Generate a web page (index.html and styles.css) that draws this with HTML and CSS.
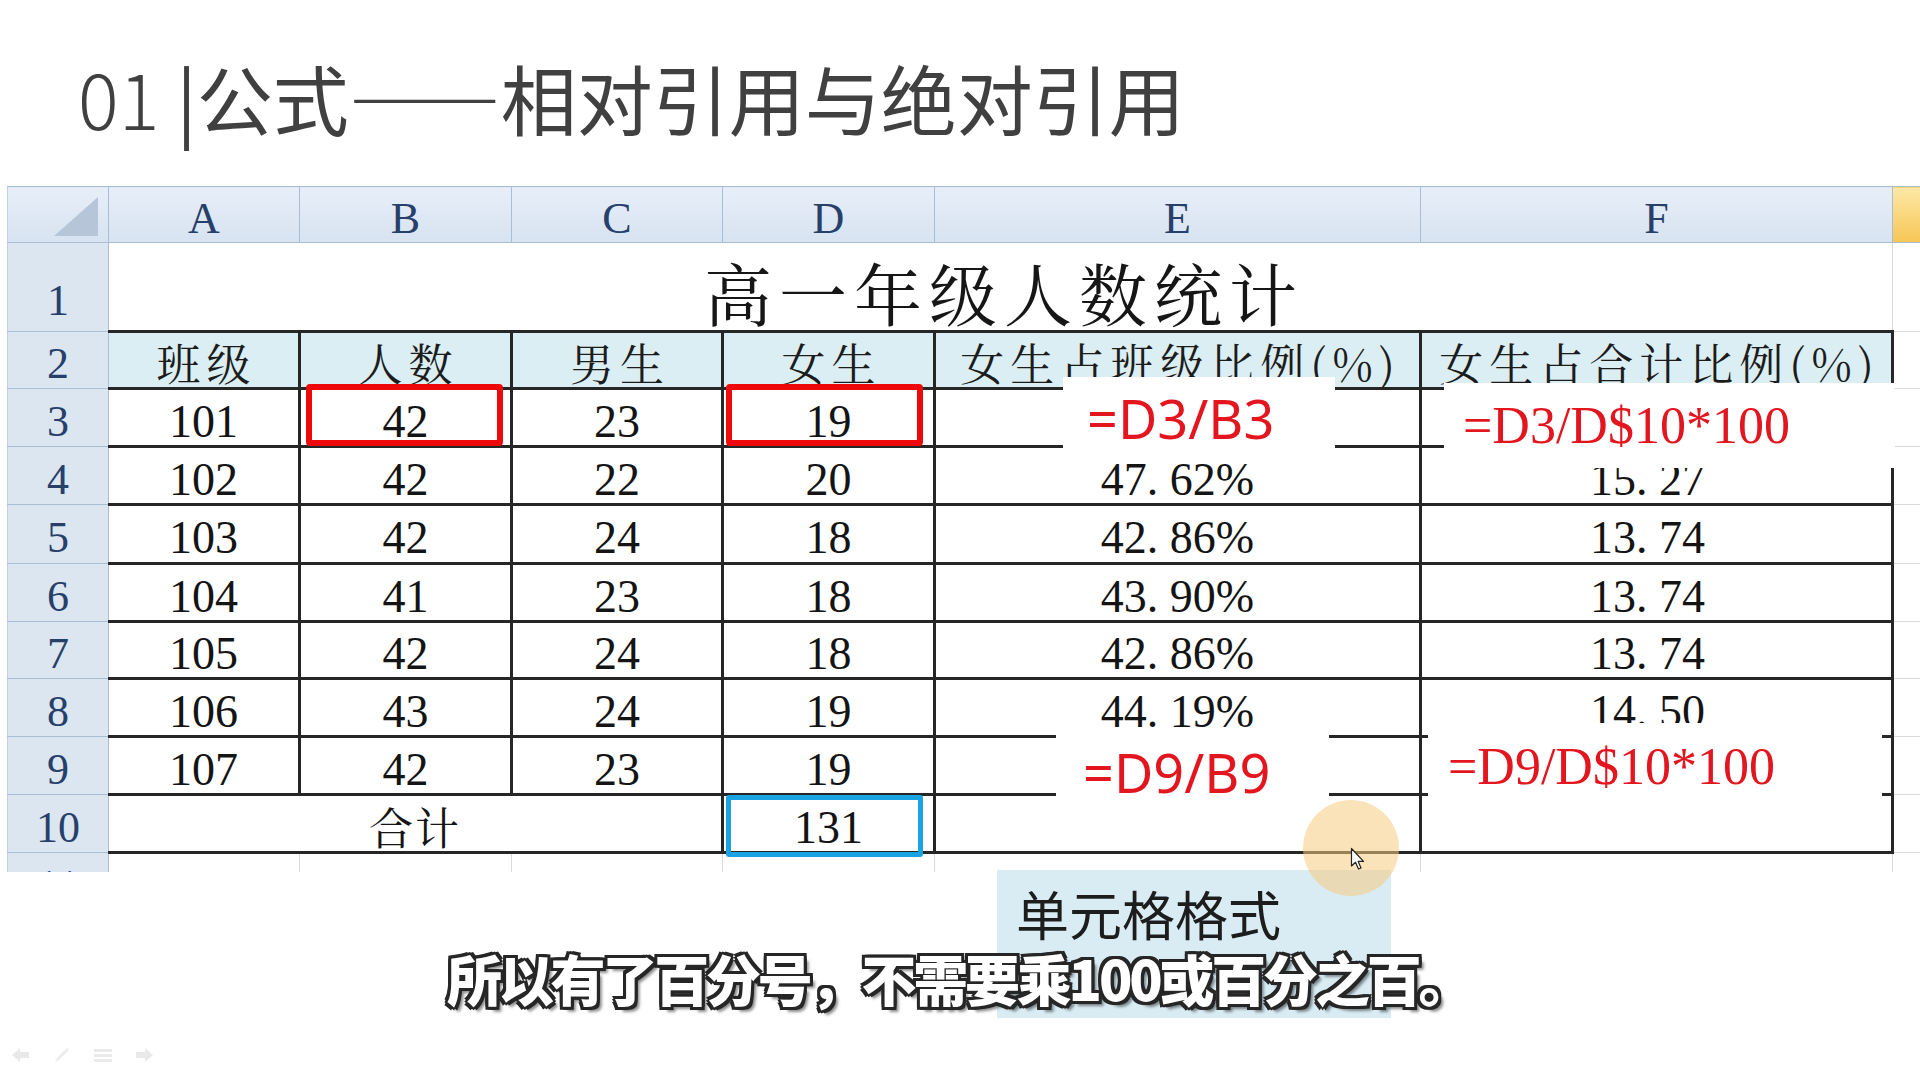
FILE: index.html
```html
<!DOCTYPE html>
<html lang="zh-CN">
<head>
<meta charset="utf-8">
<title>01 公式——相对引用与绝对引用</title>
<link rel="stylesheet" href="styles.css">
</head>
<body>
<div class="slide">
  <h1 class="title"><span class="num">01 </span><span class="bar">|</span>公式<span class="dash">——</span>相对引用与绝对引用</h1>

  <div class="sheet">
    <table class="grid">
      <colgroup>
        <col class="w-rh"><col class="w-a"><col class="w-b"><col class="w-c"><col class="w-d"><col class="w-e"><col class="w-f"><col class="w-g">
      </colgroup>
      <tr class="h-hdr">
        <th class="ch corner"><svg class="tri" width="44" height="39" viewBox="0 0 44 39"><polygon points="44,0 44,39 0,39" fill="#b7c5d8"/></svg></th>
        <th class="ch">A</th><th class="ch">B</th><th class="ch">C</th><th class="ch">D</th><th class="ch">E</th><th class="ch">F</th><th class="ch sel"></th>
      </tr>
      <tr class="h-r1">
        <th class="rh rh-low">1</th>
        <td colspan="6" class="tcell">高一年级人数统计</td>
        <td class="g"></td>
      </tr>
      <tr class="h-r2">
        <th class="rh">2</th>
        <td class="d hd first">班级</td><td class="d hd">人数</td><td class="d hd">男生</td><td class="d hd">女生</td><td class="d hd">女生占班级比例(%)</td><td class="d hd">女生占合计比例(%)</td>
        <td class="g"></td>
      </tr>
      <tr class="h-r">
        <th class="rh">3</th>
        <td class="d first">101</td><td class="d">42</td><td class="d">23</td><td class="d">19</td><td class="d"></td><td class="d fc"></td>
        <td class="g"></td>
      </tr>
      <tr class="h-r">
        <th class="rh">4</th>
        <td class="d first">102</td><td class="d">42</td><td class="d">22</td><td class="d">20</td><td class="d">47. 62%</td><td class="d fc">15. 27</td>
        <td class="g"></td>
      </tr>
      <tr class="h-r5">
        <th class="rh">5</th>
        <td class="d first">103</td><td class="d">42</td><td class="d">24</td><td class="d">18</td><td class="d">42. 86%</td><td class="d fc">13. 74</td>
        <td class="g"></td>
      </tr>
      <tr class="h-r">
        <th class="rh">6</th>
        <td class="d first">104</td><td class="d">41</td><td class="d">23</td><td class="d">18</td><td class="d">43. 90%</td><td class="d fc">13. 74</td>
        <td class="g"></td>
      </tr>
      <tr class="h-r7">
        <th class="rh">7</th>
        <td class="d first">105</td><td class="d">42</td><td class="d">24</td><td class="d">18</td><td class="d">42. 86%</td><td class="d fc">13. 74</td>
        <td class="g"></td>
      </tr>
      <tr class="h-r">
        <th class="rh">8</th>
        <td class="d first">106</td><td class="d">43</td><td class="d">24</td><td class="d">19</td><td class="d">44. 19%</td><td class="d fc">14. 50</td>
        <td class="g"></td>
      </tr>
      <tr class="h-r">
        <th class="rh">9</th>
        <td class="d first">107</td><td class="d">42</td><td class="d">23</td><td class="d">19</td><td class="d"></td><td class="d fc"></td>
        <td class="g"></td>
      </tr>
      <tr class="h-r">
        <th class="rh">10</th>
        <td colspan="3" class="d first sum">合计</td><td class="d">131</td><td class="d"></td><td class="d"></td>
        <td class="g"></td>
      </tr>
      <tr class="h-r">
        <th class="rh">11</th>
        <td class="g"></td><td class="g"></td><td class="g"></td><td class="g"></td><td class="g"></td><td class="g"></td><td class="g"></td>
      </tr>
    </table>
  </div>

  <div class="ov wb wb-e3 f-sans">=D3/B3</div>
  <div class="ov wb wb-f3 f-serif">=D3/D$10*100</div>
  <div class="ov wb wb-e9 f-sans">=D9/B9</div>
  <div class="ov wb wb-f9 f-serif">=D9/D$10*100</div>

  <div class="ov rb rb-b3"></div>
  <div class="ov rb rb-d3"></div>
  <div class="ov bb"></div>

  <div class="ov tip">单元格格式</div>
  <div class="ov hl"></div>
  <svg class="ov cursor" width="16" height="24" viewBox="0 0 16 24"><path d="M1.5 1.5 L1.5 19 L5.5 15.2 L8.5 22 L11 21 L8.2 14.4 L13.5 14.4 Z" fill="#fff" stroke="#222" stroke-width="1.2" stroke-linejoin="round"/></svg>

  <div class="ov sub">所以有了百分号，不需要乘100或百分之百。</div>

  <div class="ov nav">
    <svg width="20" height="18" viewBox="0 0 20 18"><polygon points="1,9 9,2 9,6 18,6 18,12 9,12 9,16" fill="#e9e9e9"/></svg>
    <svg width="20" height="18" viewBox="0 0 20 18"><path d="M3 16 L5 12 L15 2 L17 4 L7 14 Z" fill="#ececec"/></svg>
    <svg width="20" height="18" viewBox="0 0 20 18"><rect x="1" y="3" width="18" height="3" fill="#eaeaea"/><rect x="1" y="8" width="18" height="3" fill="#eaeaea"/><rect x="1" y="13" width="18" height="3" fill="#eaeaea"/></svg>
    <svg width="20" height="18" viewBox="0 0 20 18"><polygon points="19,9 11,2 11,6 2,6 2,12 11,12 11,16" fill="#e9e9e9"/></svg>
  </div>
</div>
</body>
</html>
```

FILE: styles.css
```css
* { box-sizing: border-box; }

body {
  margin: 0;
  background: #ffffff;
}

.slide {
  position: relative;
  width: 1920px;
  height: 1080px;
  overflow: hidden;
  background: #ffffff;
  font-family: "Noto Sans CJK SC", "Noto Sans", sans-serif;
}

/* ---------- slide title ---------- */
.title {
  margin: 0;
  height: 186px;
  padding: 55px 0 0 78px;
  font-size: 76px;
  line-height: 84px;
  font-weight: 400;
  color: #404040;
  letter-spacing: 0;
  white-space: nowrap;
}
.title .num { font-weight: 300; }
.title .dash { letter-spacing: 0; }

/* ---------- spreadsheet ---------- */
.sheet {
  margin-left: 7px;
  height: 686px;
  overflow: hidden;
}

.grid {
  border-collapse: collapse;
  table-layout: fixed;
  width: 1913px;
  font-family: "Liberation Serif", "Noto Serif CJK SC", "Noto Sans CJK SC", serif;
  color: #141414;
}

.w-rh { width: 101px; }
.w-a { width: 191px; }
.w-b { width: 212px; }
.w-c { width: 211px; }
.w-d { width: 212px; }
.w-e { width: 486px; }
.w-f { width: 472px; }
.w-g { width: 28px; }

.grid th,
.grid td {
  padding: 0;
  text-align: center;
  vertical-align: middle;
  white-space: nowrap;
  overflow: hidden;
  font-weight: 400;
}

.h-hdr { height: 56px; }
.h-r1 { height: 89px; }
.h-r2 { height: 57px; }
.h-r { height: 58px; }
.h-r5 { height: 59px; }
.h-r7 { height: 57px; }

/* column headers */
.ch {
  background: linear-gradient(#e7eef8, #d7e3f1);
  border: 1px solid #a9bdd4;
  font-size: 44px;
  line-height: 1;
  color: #27406a;
  padding-top: 8px !important;
}
.corner {
  text-align: right !important;
  vertical-align: bottom !important;
  padding: 0 10px 6px 0 !important;
  line-height: 0 !important;
  border-left: 1px solid #c3cfdd;
}
.tri { display: inline-block; vertical-align: bottom; }
.sel {
  background: linear-gradient(#fde8a6, #f6c656);
  border-left: 1px solid #d9b35a;
}

/* row headers */
.rh {
  background: #dce6f1;
  border: 1px solid #a9bdd4;
  border-left: 1px solid #c3cfdd;
  font-size: 44px;
  line-height: 1;
  color: #27406a;
  padding-top: 8px !important;
}
.rh-low {
  vertical-align: bottom !important;
  padding: 0 0 8px 0 !important;
}

/* title row */
.tcell {
  font-family: "Noto Serif CJK SC", "Noto Sans CJK SC", serif;
  font-size: 68px;
  line-height: 1.1;
  letter-spacing: 7px;
  padding: 12px 0 0 7px !important;
  color: #161616;
  border-right: 1px solid #dadada;
}

/* data cells */
.d {
  border: 3px solid #262626;
  font-size: 46px;
  line-height: 1;
  padding-top: 8px !important;
}
.d.first { border-left: none; }
.d.fc { padding-right: 18px !important; }
.hd {
  background: #dbeef3;
  font-family: "Noto Serif CJK SC", "Noto Sans CJK SC", serif;
  font-size: 44px;
  letter-spacing: 6px;
  padding: 4px 0 0 6px !important;
  color: #1c1c1c;
}
.sum {
  font-family: "Noto Serif CJK SC", "Noto Sans CJK SC", serif;
  font-size: 44px;
  letter-spacing: 2px;
  padding-top: 4px !important;
}

/* plain gridline cells */
.g {
  border: 1px solid #dadada;
}

/* ---------- overlays ---------- */
.ov { position: absolute; }

.wb {
  background: #ffffff;
  display: flex;
  align-items: center;
  white-space: nowrap;
}
.f-sans {
  font-family: "Noto Sans", "Liberation Sans", sans-serif;
  font-size: 54px;
  line-height: 1;
  color: #e3161f;
}
.f-serif {
  font-family: "Liberation Serif", serif;
  font-size: 52px;
  line-height: 1;
  color: #e3161f;
}
.wb-e3 { left: 1063px; top: 377px; width: 272px; height: 72px; padding: 10px 0 0 24px; }
.wb-f3 { left: 1444px; top: 383px; width: 451px; height: 85px; padding: 0 0 0 19px; }
.wb-e9 { left: 1056px; top: 734px; width: 273px; height: 66px; padding: 10px 0 0 27px; }
.wb-f9 { left: 1428px; top: 723px; width: 454px; height: 77px; padding: 11px 0 0 20px; }

.rb {
  border: 6px solid #ee0a0a;
  border-radius: 4px;
}
.rb-b3 { left: 306px; top: 384px; width: 197px; height: 62px; }
.rb-d3 { left: 726px; top: 384px; width: 197px; height: 62px; }

.bb {
  left: 726px;
  top: 795px;
  width: 197px;
  height: 62px;
  border: 5px solid #1aa3e2;
  border-radius: 3px;
}

.tip {
  left: 997px;
  top: 870px;
  width: 394px;
  height: 148px;
  background: #d9ecf3;
  padding: 13px 0 0 19px;
  font-size: 53px;
  line-height: 60px;
  color: #1d1d1d;
  white-space: nowrap;
}

.hl {
  left: 1303px;
  top: 800px;
  width: 96px;
  height: 96px;
  border-radius: 50%;
  background: rgba(245, 203, 128, 0.55);
}

.cursor { left: 1350px; top: 847px; }

.sub {
  left: 447px;
  top: 946px;
  font-size: 55px;
  line-height: 62px;
  font-weight: 900;
  letter-spacing: -3.2px;
  color: #ffffff;
  white-space: nowrap;
  text-shadow:
    -3px -3px 0 #262626, 3px -3px 0 #262626, -3px 3px 0 #262626, 3px 3px 0 #262626,
    0 -3px 0 #262626, 0 3px 0 #262626, -3px 0 0 #262626, 3px 0 0 #262626,
    5px 5px 3px rgba(0, 0, 0, 0.45);
}

.nav {
  left: 11px;
  top: 1046px;
  display: flex;
  gap: 21px;
}
.nav svg { display: block; }
```
